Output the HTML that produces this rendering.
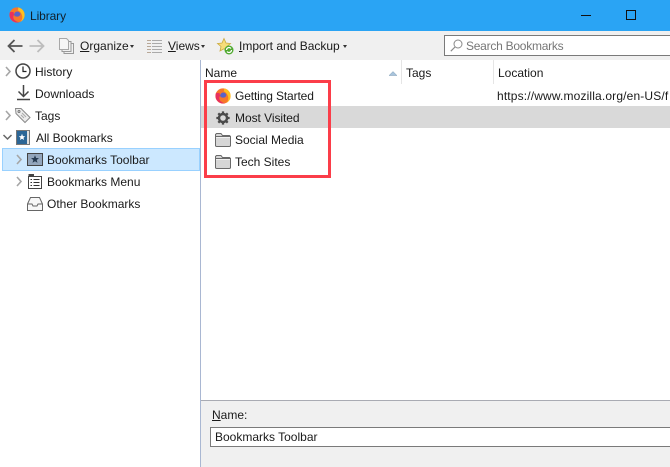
<!DOCTYPE html>
<html><head><meta charset="utf-8">
<style>
html,body{margin:0;padding:0}
body{width:670px;height:467px;overflow:hidden;position:relative;background:#fff;font-family:"Liberation Sans",sans-serif;font-size:12px;color:#1a1a1a}
.a{position:absolute}
.t{position:absolute;white-space:nowrap;line-height:16px;height:16px}
svg{position:absolute;overflow:visible}
u{text-decoration:underline}
</style></head><body>
<svg width="0" height="0" style="position:absolute"><defs>
<g id="ff"><circle cx="8" cy="8" r="7.6" fill="#f7772a"/><path d="M9 .5A7.6 7.6 0 0 1 15.6 8C15.6 11 14 13.5 11.5 14.8 13.5 12.5 13.8 9.5 12.6 7.2 12 5.5 10.6 3.8 8.6 3.2 9.4 2.4 9.4 1.4 9 .5Z" fill="#ffc11f"/><path d="M.9 5.2C0 8 .7 11.2 2.8 13.3 4.8 15.4 7.8 16 10.2 15.2 7.2 14.8 5 13.3 4.4 11 4 9.3 4.6 8.2 5.6 7.6 4.8 6.8 4.4 6 4.6 5 3.2 5 1.8 4.6 .9 5.2Z" fill="#e8305f"/><circle cx="8.3" cy="7.6" r="3.1" fill="#5a62c8"/><path d="M5.4 8.6C6 10.6 8.2 11.6 10 10.9 11.6 10.2 12.2 8.4 11.6 6.8 11.2 9 9.4 10 7.6 9.6 6.6 9.4 5.9 9 5.4 8.6Z" fill="#f7772a"/></g>
<g id="fold"><path d="M.5 13V1.5L1.5 .5H6L7.5 2.5H14.5L15.5 3.5V13L14.5 13.5H1.5Z" fill="#d6d6d6" stroke="#6a6a6a"/><path d="M1 3.5H15" stroke="#6a6a6a"/><path d="M1 4.5H15" stroke="#f0f0f0"/></g>
<path id="chev" d="M0 0L4 4.5 0 9" fill="none" stroke="#a6a6a6" stroke-width="1.6"/>
</defs></svg>

<!-- title bar -->
<div class="a" style="left:0;top:0;width:670px;height:31px;background:#2aa4f4"></div>
<svg style="left:9px;top:7px" width="16" height="16" viewBox="0 0 16 16"><use href="#ff"/></svg>
<div class="t" style="left:30px;top:8px;color:#10202c;letter-spacing:-.1px">Library</div>
<div class="a" style="left:581px;top:15px;width:10px;height:1px;background:#111"></div>
<div class="a" style="left:626px;top:10px;width:8px;height:8px;border:1px solid #111"></div>

<!-- toolbar -->
<div class="a" style="left:0;top:31px;width:670px;height:29px;background:#f0f0f0"></div>
<svg style="left:7px;top:39px" width="16" height="14" viewBox="0 0 16 14"><path d="M15.5 7H1.5M7.5 1L1.5 7 7.5 13" fill="none" stroke="#555" stroke-width="1.8"/></svg>
<svg style="left:29px;top:39px" width="16" height="14" viewBox="0 0 16 14"><path d="M.5 7H14.5M8.5 1L14.5 7 8.5 13" fill="none" stroke="#bdbdbd" stroke-width="1.8"/></svg>
<svg style="left:59px;top:38px" width="16" height="16" viewBox="0 0 16 16"><path d="M.5.5H7.5L9.5 2.5V11.5H.5Z" fill="#f6f6f6" stroke="#a8a8a8"/><path d="M10 3.5H12V13.5H3V12" fill="none" stroke="#999"/><path d="M12.5 5.5H14.5V15.5H5V14" fill="none" stroke="#999"/></svg>
<div class="t" style="left:80px;top:38px"><u>O</u>rganize</div>
<div class="a" style="left:130px;top:45px;border:2.5px solid transparent;border-top:3px solid #333;border-bottom:0"></div>
<svg style="left:147px;top:40px" width="15" height="13" viewBox="0 0 15 13"><path d="M0 .5H4M0 3.5H4M0 6.5H4M0 9.5H4M0 12.5H4" stroke="#b8a898"/><path d="M5 .5H15M5 3.5H15M5 6.5H15M5 9.5H15M5 12.5H15" stroke="#aaa"/></svg>
<div class="t" style="left:168px;top:38px"><u>V</u>iews</div>
<div class="a" style="left:201px;top:45px;border:2.5px solid transparent;border-top:3px solid #333;border-bottom:0"></div>
<svg style="left:217px;top:38px" width="17" height="17" viewBox="0 0 17 17"><path d="M7 .5L9 5 13.5 5.5 10 8.5 11 13 7 10.8 3 13 4 8.5 .5 5.5 5 5Z" fill="#f7dd7a" stroke="#c9a93f" stroke-width=".8"/><circle cx="12" cy="12" r="4.5" fill="#4fa92f"/><path d="M9.5 12A2.5 2.5 0 0 1 14 10.5M14.5 12A2.5 2.5 0 0 1 10 13.5" fill="none" stroke="#fff" stroke-width="1.2"/></svg>
<div class="t" style="left:239px;top:38px"><u>I</u>mport and Backup</div>
<div class="a" style="left:343px;top:45px;border:2.5px solid transparent;border-top:3px solid #333;border-bottom:0"></div>
<div class="a" style="left:444px;top:35px;width:226px;height:19px;background:#fff;border:1px solid #7a7a7a;border-right:0"></div>
<svg style="left:450px;top:39px" width="13" height="13" viewBox="0 0 13 13"><circle cx="8" cy="5" r="4" fill="none" stroke="#8a8a8a"/><path d="M5 8L.8 12.2" stroke="#8a8a8a" stroke-width="1.2"/></svg>
<div class="t" style="left:466px;top:38px;color:#777;letter-spacing:-.25px">Search Bookmarks</div>

<!-- sidebar -->
<div class="a" style="left:0;top:60px;width:200px;height:407px;background:#fff"></div>
<div class="a" style="left:200px;top:60px;width:1px;height:407px;background:#a9b7d2"></div>
<div class="a" style="left:2px;top:148px;width:196px;height:21px;background:#cce8ff;border:1px solid #99d1ff"></div>

<svg style="left:6px;top:67px" width="5" height="9"><use href="#chev"/></svg>
<svg style="left:15px;top:63px" width="16" height="16" viewBox="0 0 16 16"><circle cx="8" cy="8" r="7" fill="#fff" stroke="#444" stroke-width="1.5"/><path d="M8 3.5V8.5H11.5" fill="none" stroke="#222" stroke-width="1.2"/></svg>
<div class="t" style="left:35px;top:64px">History</div>

<svg style="left:16px;top:85px" width="15" height="16" viewBox="0 0 15 16"><path d="M7.5 0V11M2.5 6.5L7.5 11.5 12.5 6.5" fill="none" stroke="#444" stroke-width="1.5"/><path d="M1 14.5H14" stroke="#444" stroke-width="1.5"/></svg>
<div class="t" style="left:35px;top:86px">Downloads</div>

<svg style="left:6px;top:111px" width="5" height="9"><use href="#chev"/></svg>
<svg style="left:15px;top:107px" width="16" height="16" viewBox="0 0 16 16"><path d="M.5 1.5H6L15 10.5 10 15.5 1 6.5Z" fill="#ececec" stroke="#8a8a8a"/><circle cx="4" cy="4.5" r="1" fill="#fff" stroke="#777"/><path d="M7 6L11 10M6 8L9 11" stroke="#aaa"/></svg>
<div class="t" style="left:35px;top:108px">Tags</div>

<svg style="left:3px;top:135px" width="9" height="5" viewBox="0 0 9 5"><path d="M.5 0L4.5 4 8.5 0" fill="none" stroke="#666" stroke-width="1.5"/></svg>
<svg style="left:16px;top:130px" width="14" height="15" viewBox="0 0 14 15"><rect x=".5" y=".5" width="13" height="14" fill="#e0e0e0" stroke="#777"/><rect x="1" y="1" width="10" height="13" fill="#2c6696"/><path d="M6 3.8L6.9 6.1 9.2 6.2 7.5 7.7 8 10 6 8.7 4 10 4.5 7.7 2.8 6.2 5.1 6.1Z" fill="#fff"/></svg>
<div class="t" style="left:36px;top:130px">All Bookmarks</div>

<svg style="left:17px;top:155px" width="5" height="9"><use href="#chev"/></svg>
<svg style="left:27px;top:153px" width="16" height="13" viewBox="0 0 16 13"><rect x=".5" y=".5" width="15" height="12" fill="#93a6bc" stroke="#444"/><path d="M8 2.2L9.1 5 12 5.1 9.7 7 10.5 9.8 8 8.2 5.5 9.8 6.3 7 4 5.1 6.9 5Z" fill="#263a50"/></svg>
<div class="t" style="left:47px;top:152px">Bookmarks Toolbar</div>

<svg style="left:17px;top:177px" width="5" height="9"><use href="#chev"/></svg>
<svg style="left:28px;top:174px" width="14" height="15" viewBox="0 0 14 15"><path d="M.5 2.5H13.5V14.5H.5Z" fill="#fff" stroke="#444"/><path d="M.5 1H6" stroke="#444" stroke-width="2"/><path d="M2.5 5.5H4M2.5 8.5H4M2.5 11.5H4M5.5 5.5H11.5M5.5 8.5H11.5M5.5 11.5H11.5" stroke="#333"/></svg>
<div class="t" style="left:47px;top:174px">Bookmarks Menu</div>

<svg style="left:27px;top:197px" width="16" height="14" viewBox="0 0 16 14"><path d="M.5 7L3.5 .5H12.5L15.5 7V13.5H.5Z" fill="#f7f7f7" stroke="#666"/><path d="M.5 7H5L6 9H10L11 7H15.5" fill="none" stroke="#666"/></svg>
<div class="t" style="left:47px;top:196px">Other Bookmarks</div>

<!-- column headers -->
<div class="a" style="left:401px;top:60px;width:1px;height:24px;background:#e5e5e5"></div>
<div class="a" style="left:493px;top:60px;width:1px;height:24px;background:#e5e5e5"></div>
<div class="t" style="left:205px;top:65px">Name</div>
<svg style="left:389px;top:71px" width="8" height="5" viewBox="0 0 8 5"><path d="M0 4.5L4 .5 8 4.5Z" fill="#a9c4dc" stroke="#7d9bb5" stroke-width=".5"/></svg>
<div class="t" style="left:406px;top:65px">Tags</div>
<div class="t" style="left:498px;top:65px">Location</div>

<!-- list -->
<div class="a" style="left:201px;top:106px;width:469px;height:22px;background:#d9d9d9"></div>
<svg style="left:215px;top:88px" width="16" height="16" viewBox="0 0 16 16"><use href="#ff"/></svg>
<div class="t" style="left:235px;top:88px;letter-spacing:-.13px">Getting Started</div>
<div class="t" style="left:497px;top:88px;letter-spacing:.15px">https://www.mozilla.org/en-US/f</div>
<svg style="left:216px;top:111px" width="14" height="14" viewBox="0 0 16 16"><circle cx="8" cy="8" r="4.6" fill="none" stroke="#4a4a4a" stroke-width="2.8"/><path d="M8 .4V15.6M.4 8H15.6M2.6 2.6L13.4 13.4M13.4 2.6L2.6 13.4" stroke="#4a4a4a" stroke-width="2.6" stroke-dasharray="3 9.2"/></svg>
<div class="t" style="left:235px;top:110px;letter-spacing:-.05px">Most Visited</div>
<svg style="left:215px;top:133px" width="16" height="14" viewBox="0 0 16 14"><use href="#fold"/></svg>
<div class="t" style="left:235px;top:132px">Social Media</div>
<svg style="left:215px;top:155px" width="16" height="14" viewBox="0 0 16 14"><use href="#fold"/></svg>
<div class="t" style="left:235px;top:154px">Tech Sites</div>

<!-- red box -->
<div class="a" style="left:204px;top:80px;width:121px;height:92px;border:3px solid #fb3d49"></div>

<!-- bottom pane -->
<div class="a" style="left:201px;top:400px;width:469px;height:67px;background:#f0f0f0;border-top:1px solid #a9abb3;box-sizing:border-box"></div>
<div class="t" style="left:212px;top:407px"><u>N</u>ame:</div>
<div class="a" style="left:210px;top:427px;width:460px;height:18px;background:#fff;border:1px solid #7a7a7a;border-right:0"></div>
<div class="t" style="left:215px;top:429px">Bookmarks Toolbar</div>
</body></html>
